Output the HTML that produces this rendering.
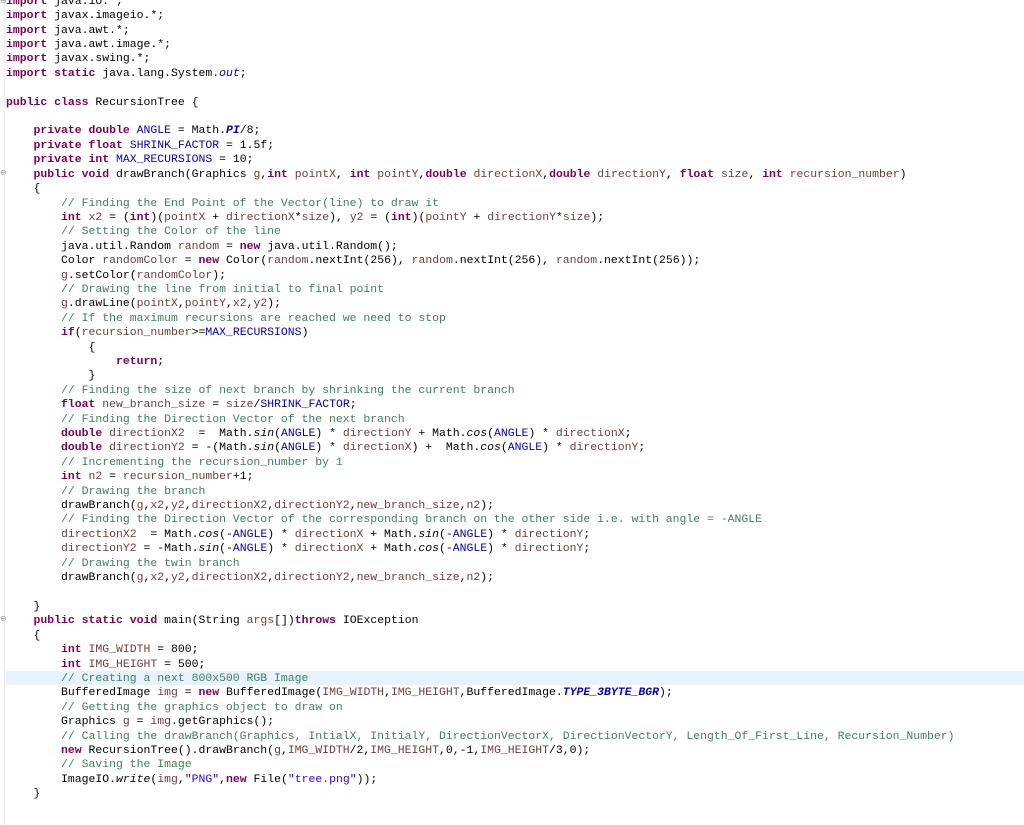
<!DOCTYPE html>
<html><head><meta charset="utf-8"><style>
html,body{margin:0;padding:0;background:#fff;width:1024px;height:825px;overflow:hidden;position:relative}
pre{position:absolute;left:6px;top:-5.2px;margin:0;font-family:"Liberation Mono",monospace;font-size:11.46px;line-height:14.4px;color:#000;z-index:2}
.k{color:#7f0055;font-weight:bold}.c{color:#3f7f5f}.f{color:#0000c0}.s{color:#2a00ff}.v{color:#6a3e3e}.i{font-style:italic}
.hl{position:absolute;left:6px;width:1018px;top:671px;height:14px;background:#e8f2fe;z-index:1}
.gut{position:absolute;left:4px;top:0;width:1px;height:825px;background:#eee}
.fold{position:absolute;left:0;width:5px;font-size:8px;color:#999;font-family:"Liberation Sans",sans-serif}
</style></head><body>
<div class="gut"></div><div class="hl"></div>
<div class="fold" style="top:168px">⊖</div><div class="fold" style="top:614px">⊖</div><div class="fold" style="top:-4px">⊖</div>
<pre><span class="k">import</span> java.io.*;
<span class="k">import</span> javax.imageio.*;
<span class="k">import</span> java.awt.*;
<span class="k">import</span> java.awt.image.*;
<span class="k">import</span> javax.swing.*;
<span class="k">import</span> <span class="k">static</span> java.lang.System.<span class="f i">out</span>;

<span class="k">public</span> <span class="k">class</span> RecursionTree {

    <span class="k">private</span> <span class="k">double</span> <span class="f">ANGLE</span> = Math.<span class="f i" style="font-weight:bold">PI</span>/8;
    <span class="k">private</span> <span class="k">float</span> <span class="f">SHRINK_FACTOR</span> = 1.5f;
    <span class="k">private</span> <span class="k">int</span> <span class="f">MAX_RECURSIONS</span> = 10;
    <span class="k">public</span> <span class="k">void</span> drawBranch(Graphics <span class="v">g</span>,<span class="k">int</span> <span class="v">pointX</span>, <span class="k">int</span> <span class="v">pointY</span>,<span class="k">double</span> <span class="v">directionX</span>,<span class="k">double</span> <span class="v">directionY</span>, <span class="k">float</span> <span class="v">size</span>, <span class="k">int</span> <span class="v">recursion_number</span>)
    {
        <span class="c">// Finding the End Point of the Vector(line) to draw it</span>
        <span class="k">int</span> <span class="v">x2</span> = (<span class="k">int</span>)(<span class="v">pointX</span> + <span class="v">directionX</span>*<span class="v">size</span>), <span class="v">y2</span> = (<span class="k">int</span>)(<span class="v">pointY</span> + <span class="v">directionY</span>*<span class="v">size</span>);
        <span class="c">// Setting the Color of the line</span>
        java.util.Random <span class="v">random</span> = <span class="k">new</span> java.util.Random();
        Color <span class="v">randomColor</span> = <span class="k">new</span> Color(<span class="v">random</span>.nextInt(256), <span class="v">random</span>.nextInt(256), <span class="v">random</span>.nextInt(256));
        <span class="v">g</span>.setColor(<span class="v">randomColor</span>);
        <span class="c">// Drawing the line from initial to final point</span>
        <span class="v">g</span>.drawLine(<span class="v">pointX</span>,<span class="v">pointY</span>,<span class="v">x2</span>,<span class="v">y2</span>);
        <span class="c">// If the maximum recursions are reached we need to stop</span>
        <span class="k">if</span>(<span class="v">recursion_number</span>&gt;=<span class="f">MAX_RECURSIONS</span>)
            {
                <span class="k">return</span>;
            }
        <span class="c">// Finding the size of next branch by shrinking the current branch</span>
        <span class="k">float</span> <span class="v">new_branch_size</span> = <span class="v">size</span>/<span class="f">SHRINK_FACTOR</span>;
        <span class="c">// Finding the Direction Vector of the next branch</span>
        <span class="k">double</span> <span class="v">directionX2</span>  =  Math.<span class="i">sin</span>(<span class="f">ANGLE</span>) * <span class="v">directionY</span> + Math.<span class="i">cos</span>(<span class="f">ANGLE</span>) * <span class="v">directionX</span>;
        <span class="k">double</span> <span class="v">directionY2</span> = -(Math.<span class="i">sin</span>(<span class="f">ANGLE</span>) * <span class="v">directionX</span>) +  Math.<span class="i">cos</span>(<span class="f">ANGLE</span>) * <span class="v">directionY</span>;
        <span class="c">// Incrementing the recursion_number by 1</span>
        <span class="k">int</span> <span class="v">n2</span> = <span class="v">recursion_number</span>+1;
        <span class="c">// Drawing the branch</span>
        drawBranch(<span class="v">g</span>,<span class="v">x2</span>,<span class="v">y2</span>,<span class="v">directionX2</span>,<span class="v">directionY2</span>,<span class="v">new_branch_size</span>,<span class="v">n2</span>);
        <span class="c">// Finding the Direction Vector of the corresponding branch on the other side i.e. with angle = -ANGLE</span>
        <span class="v">directionX2</span>  = Math.<span class="i">cos</span>(-<span class="f">ANGLE</span>) * <span class="v">directionX</span> + Math.<span class="i">sin</span>(-<span class="f">ANGLE</span>) * <span class="v">directionY</span>;
        <span class="v">directionY2</span> = -Math.<span class="i">sin</span>(-<span class="f">ANGLE</span>) * <span class="v">directionX</span> + Math.<span class="i">cos</span>(-<span class="f">ANGLE</span>) * <span class="v">directionY</span>;
        <span class="c">// Drawing the twin branch</span>
        drawBranch(<span class="v">g</span>,<span class="v">x2</span>,<span class="v">y2</span>,<span class="v">directionX2</span>,<span class="v">directionY2</span>,<span class="v">new_branch_size</span>,<span class="v">n2</span>);

    }
    <span class="k">public</span> <span class="k">static</span> <span class="k">void</span> main(String <span class="v">args</span>[])<span class="k">throws</span> IOException
    {
        <span class="k">int</span> <span class="v">IMG_WIDTH</span> = 800;
        <span class="k">int</span> <span class="v">IMG_HEIGHT</span> = 500;
        <span class="c">// Creating a next 800x500 RGB Image</span>
        BufferedImage <span class="v">img</span> = <span class="k">new</span> BufferedImage(<span class="v">IMG_WIDTH</span>,<span class="v">IMG_HEIGHT</span>,BufferedImage.<span class="f i" style="font-weight:bold">TYPE_3BYTE_BGR</span>);
        <span class="c">// Getting the graphics object to draw on</span>
        Graphics <span class="v">g</span> = <span class="v">img</span>.getGraphics();
        <span class="c">// Calling the drawBranch(Graphics, IntialX, InitialY, DirectionVectorX, DirectionVectorY, Length_Of_First_Line, Recursion_Number)</span>
        <span class="k">new</span> RecursionTree().drawBranch(<span class="v">g</span>,<span class="v">IMG_WIDTH</span>/2,<span class="v">IMG_HEIGHT</span>,0,-1,<span class="v">IMG_HEIGHT</span>/3,0);
        <span class="c">// Saving the Image</span>
        ImageIO.<span class="i">write</span>(<span class="v">img</span>,<span class="s">"PNG"</span>,<span class="k">new</span> File(<span class="s">"tree.png"</span>));
    }
</pre>
</body></html>
